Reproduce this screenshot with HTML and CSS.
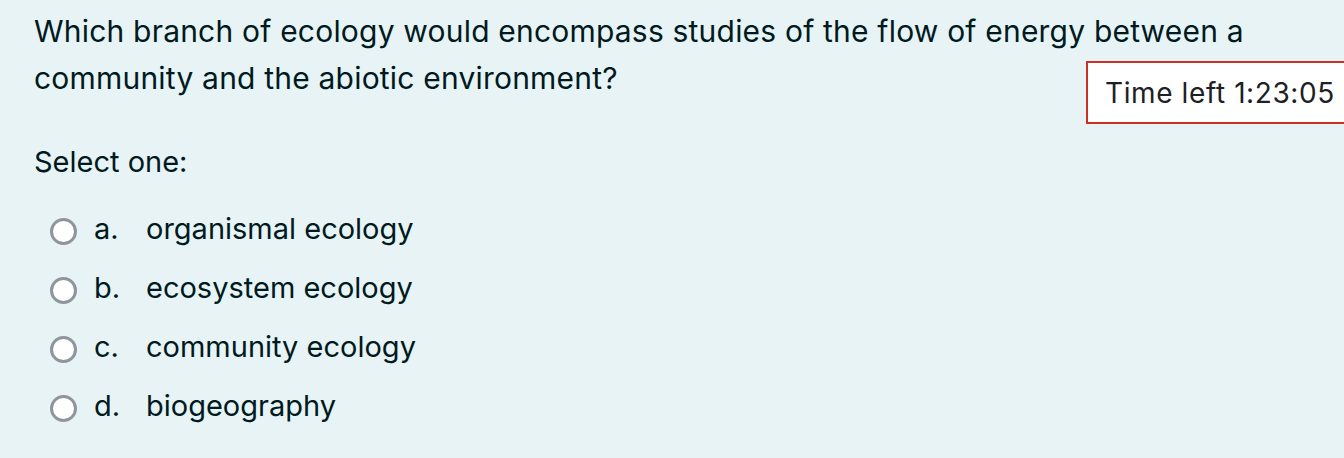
FILE: index.html
```html
<!DOCTYPE html>
<html>
<head>
<meta charset="utf-8">
<link rel="stylesheet" href="styles.css">
</head>
<body>
<div class="page">
  <div class="qtext">
    <p><span class="line">Which branch of ecology would encompass studies of the flow of energy between a</span> <span class="line">community and the abiotic environment?</span></p>
    <div class="timer">Time left 1:23:05</div>
  </div>
  <div class="prompt">Select one:</div>
  <div class="answers">
    <label class="opt"><span class="radio"></span><span class="letter">a.</span><span class="txt">organismal ecology</span></label>
    <label class="opt"><span class="radio"></span><span class="letter">b.</span><span class="txt">ecosystem ecology</span></label>
    <label class="opt"><span class="radio"></span><span class="letter">c.</span><span class="txt">community ecology</span></label>
    <label class="opt"><span class="radio"></span><span class="letter">d.</span><span class="txt">biogeography</span></label>
  </div>
</div>
</body>
</html>
```
FILE: styles.css
```css
html, body {
  margin: 0;
  padding: 0;
  background: #e7f3f5;
}
body {
  font-family: Inter, "Liberation Sans", sans-serif;
  color: #001a1e;
  overflow: hidden;
}
.page {
  width: 1344px;
  height: 458px;
  padding: 8px 0 0 34px;
  box-sizing: border-box;
}
.qtext {
  position: relative;
  font-size: 30px;
  letter-spacing: 0.2px;
  line-height: 47px;
}
.qtext p {
  margin: 0;
}
.line {
  display: block;
  width: fit-content;
  white-space: nowrap;
}
.timer {
  position: absolute;
  left: 1052px;
  top: 53px;
  width: 280px;
  height: 63px;
  box-sizing: border-box;
  background: #fff;
  border: 2px solid #ca3120;
  font-size: 28px;
  letter-spacing: 0.6px;
  line-height: 61px;
  padding-left: 17px;
  color: #1d2125;
  white-space: nowrap;
  overflow: hidden;
}
.prompt {
  font-size: 29px;
  line-height: 40px;
  margin-top: 40px;
}
.answers {
  margin-top: 26px;
  padding-left: 15px;
  display: flex;
  flex-direction: column;
  gap: 19px;
}
.opt {
  display: flex;
  align-items: center;
  height: 40px;
  font-size: 29px;
}
.radio {
  width: 21px;
  height: 21px;
  border: 3px solid #8f959e;
  border-radius: 50%;
  background: #fff;
  flex: none;
  margin-top: 6px;
  margin-left: 1px;
}
.letter {
  margin-left: 17px;
  width: 52px;
}
```
